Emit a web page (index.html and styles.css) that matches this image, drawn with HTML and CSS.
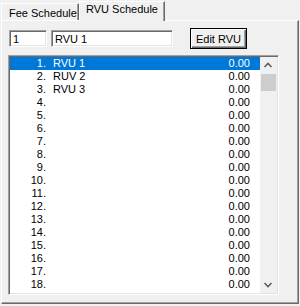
FILE: index.html
```html
<!DOCTYPE html>
<html lang="en">
<head>
    <meta charset="UTF-8">
    <title>RVU Schedule</title>
    <link rel="stylesheet" href="styles.css">
</head>
<body>
    <div class="tabs">
        <div class="tab">Fee Schedule</div>
        <div class="tab active">RVU Schedule</div>
    </div>
    <div class="panel">
        <div class="edit-row">
            <input class="edit code" type="text" value="1">
            <input class="edit name" type="text" value="RVU 1">
            <button class="btn">Edit RVU</button>
        </div>
        <div class="listbox">
            <ul id="rvu-list" class="rows"></ul>
            <div class="scrollbar">
                <div class="sb-btn">
                    <svg width="17" height="17" viewBox="0 0 17 17"><polyline points="4.5,10 8,6.5 11.5,10" fill="none" stroke="#606060" stroke-width="1.6"/></svg>
                </div>
                <div class="sb-track"><div class="sb-thumb"></div></div>
                <div class="sb-btn">
                    <svg width="17" height="17" viewBox="0 0 17 17"><polyline points="4.5,7 8,10.5 11.5,7" fill="none" stroke="#606060" stroke-width="1.6"/></svg>
                </div>
            </div>
        </div>
    </div>
    <script>
        const names = ["RVU 1", "RUV 2", "RVU 3"];
        let html = "";
        for (let i = 1; i <= 19; i++) {
            html += `<li class="${i === 1 ? "selected" : ""}">
                <span class="num">${i}.</span>
                <span class="label">${names[i - 1] || ""}</span>
                <span class="value">0.00</span>
            </li>`;
        }
        document.getElementById("rvu-list").innerHTML = html;
    </script>
</body>
</html>
```

FILE: styles.css
```css
* {
    box-sizing: border-box;
}
body {
    margin: 0;
    background: #f0f0f0;
    font-family: "Liberation Sans", Arial, sans-serif;
    font-size: 11px;
    color: #000;
    width: 300px;
    height: 306px;
    overflow: hidden;
}
.tabs {
    display: flex;
    align-items: flex-end;
    height: 20px;
    padding-left: 1px;
}
.tab {
    height: 17px;
    width: 78px;
    padding: 3px 0 0 7px;
    line-height: 13px;
    background: #f0f0f0;
    border-top: 1px solid #fff;
    border-left: 1px solid #fff;
    border-right: 1px solid #696969;
    box-shadow: inset -1px 0 #a0a0a0;
    white-space: nowrap;
}
.tab.active {
    position: relative;
    z-index: 1;
    height: 20px;
    width: 86px;
    margin-bottom: -1px;
    padding: 1px 0 0 6px;
}
.panel {
    margin-left: 1px;
    width: 298px;
    height: 284px;
    border-top: 1px solid #fff;
    border-left: 1px solid #fff;
    border-right: 1px solid #696969;
    border-bottom: 1px solid #696969;
    box-shadow: inset -1px -1px #a0a0a0;
    padding: 7px 0 0 6px;
}
.edit-row {
    display: flex;
    align-items: center;
    height: 21px;
    padding-left: 1px;
}
.edit {
    height: 17px;
    margin: 0;
    padding: 1px 0 0 3px;
    font-family: inherit;
    font-size: 11px;
    background: #fff;
    border: 1px solid;
    border-color: #a0a0a0 #fff #fff #a0a0a0;
    box-shadow: inset 1px 1px #696969, inset -1px -1px #e3e3e3;
    outline: none;
}
.code {
    width: 38px;
}
.name {
    width: 122px;
    margin-left: 4px;
}
.btn {
    width: 57px;
    height: 21px;
    margin: 0 0 0 17px;
    padding: 0;
    font-family: inherit;
    font-size: 11px;
    color: #000;
    background: #f0f0f0;
    border: 1px solid #000;
    box-shadow: inset 1px 1px #fff, inset -1px -1px #696969, inset -2px -2px #a0a0a0;
}
.listbox {
    display: flex;
    width: 271px;
    height: 240px;
    margin-top: 6px;
    background: #fff;
    border: 1px solid;
    border-color: #a0a0a0 #fff #fff #a0a0a0;
    box-shadow: inset 1px 1px #696969, inset -1px -1px #e3e3e3;
    padding: 1px;
    overflow: hidden;
}
.rows {
    flex: 1;
    margin: 0;
    padding: 0;
    list-style: none;
    overflow: hidden;
}
.rows li {
    display: flex;
    height: 13px;
    line-height: 13px;
    padding-right: 10px;
    white-space: nowrap;
}
.rows li.selected {
    background: #0078d7;
    color: #fff;
}
.num {
    width: 36px;
    text-align: right;
}
.label {
    flex: 1;
    padding-left: 7px;
}
.value {
    text-align: right;
}
.scrollbar {
    display: flex;
    flex-direction: column;
    width: 17px;
    background: #f0f0f0;
}
.sb-btn {
    height: 17px;
}
.sb-btn svg {
    display: block;
}
.sb-track {
    flex: 1;
    padding: 0 1px;
}
.sb-thumb {
    height: 17px;
    background: #cdcdcd;
}
```
